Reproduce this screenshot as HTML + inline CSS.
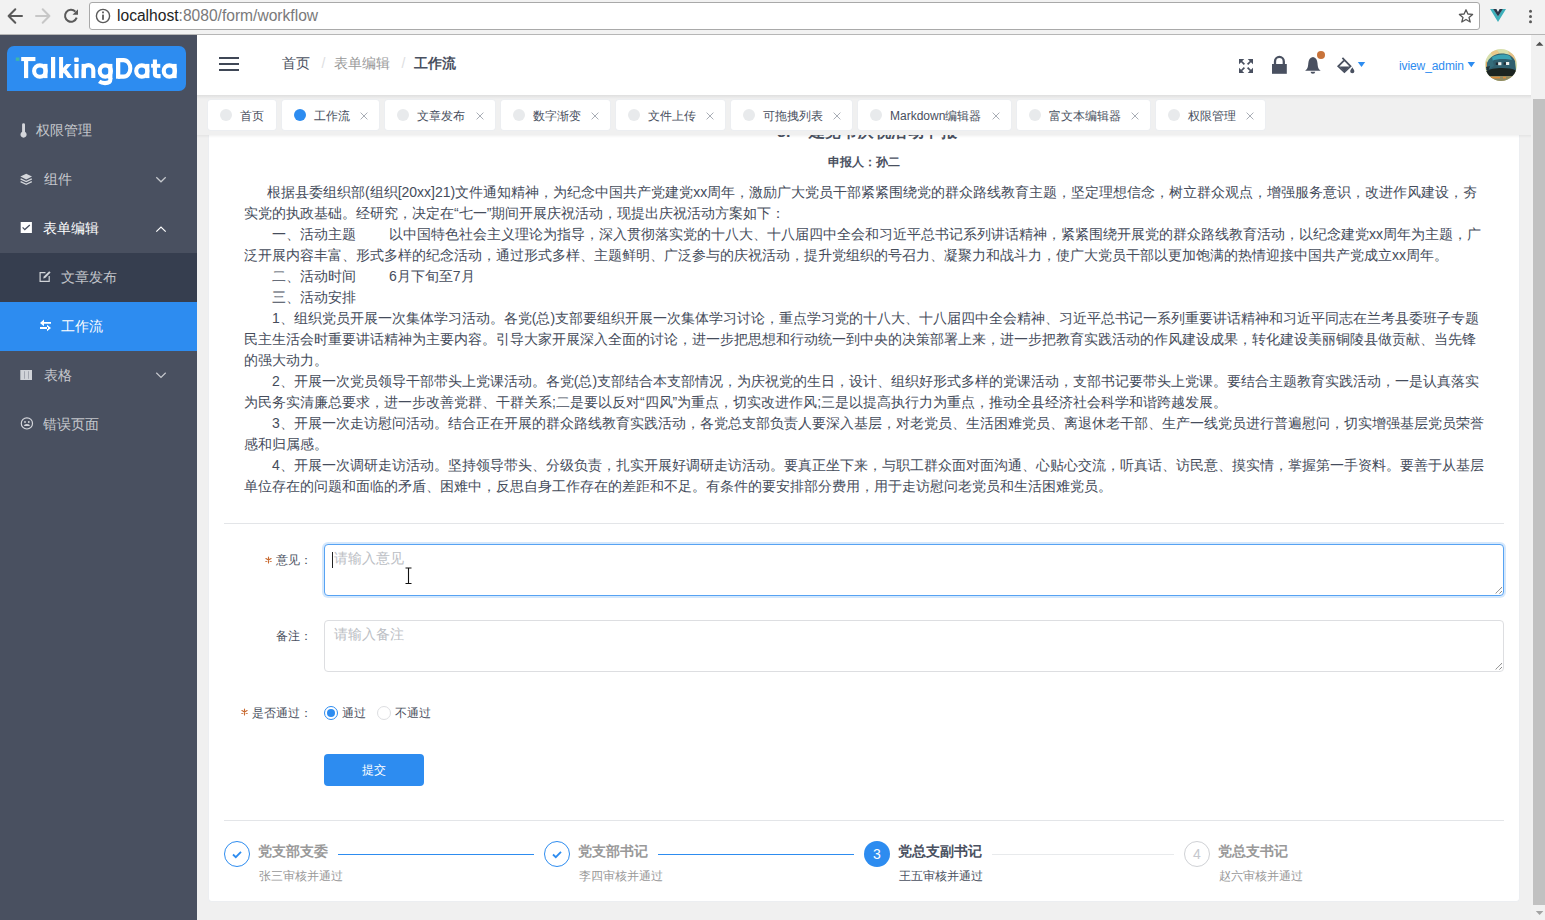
<!DOCTYPE html>
<html><head><meta charset="utf-8">
<style>
*{margin:0;padding:0;box-sizing:border-box}
html,body{width:1545px;height:920px;overflow:hidden;background:#f0f0f0;font-family:"Liberation Sans",sans-serif;color:#495060}
svg{position:absolute;overflow:visible}
i{font-style:normal}
#chrome{position:absolute;left:0;top:0;width:1545px;height:35px;background:#f2f2f2;border-bottom:1px solid #b6b6b6}
#addr{position:absolute;left:89px;top:2px;width:1391px;height:28px;background:#fff;border:1px solid #a9a9a9;border-radius:3px}
#url{position:absolute;left:117px;top:6px;font-size:15.6px;line-height:20px;white-space:nowrap;color:#222}
#url span{color:#7a7a7a}
#side{position:absolute;left:0;top:35px;width:197px;height:885px;background:#495060}
#logo{position:absolute;left:7px;top:46px;width:179px;height:45px;background:#2d8cf0;border-radius:7px 7px 7px 0}
.mt{position:absolute;font-size:14px;line-height:20px;white-space:nowrap;color:rgba(255,255,255,.7)}
#header{position:absolute;left:197px;top:35px;width:1334px;height:60px;background:#fff}
#tabbar{position:absolute;left:197px;top:95px;width:1334px;height:40px;background:#f0f0f0;z-index:3}
#tabshadow{position:absolute;left:197px;top:95px;width:1334px;height:4px;background:linear-gradient(rgba(0,0,0,.07),rgba(0,0,0,0));z-index:4}
#cardshadow{position:absolute;left:197px;top:135px;width:1334px;height:3px;background:linear-gradient(rgba(0,0,0,.05),rgba(0,0,0,0));z-index:4}
.tab{position:absolute;top:100px;height:30px;background:#fff;border-radius:3px;font-size:12px;line-height:30px;white-space:nowrap;color:#495060;box-shadow:0 0 0 1px #eceef1;z-index:5}
.tab .dot{position:absolute;left:12px;top:9px;width:12px;height:12px;border-radius:50%;background:#e8eaec}
.tab .tt{position:absolute;left:32px;top:0.7px}
.tab .x{left:0;top:11.6px;width:8px;height:8px}
#card{position:absolute;left:208px;top:135px;width:1312px;height:767px;background:#fff;border-radius:0 0 4px 4px;border:1px solid #eceef1;border-top:0}
#scroll{position:absolute;left:1531px;top:35px;width:14px;height:885px;background:#f1f1f1}
#thumb{position:absolute;left:1533px;top:99px;width:12px;height:806px;background:#c1c1c1}
.ln{position:absolute;font-size:14px;line-height:21px;white-space:nowrap;color:#454c5b}
.sp{display:inline-block;width:33px}
.hr{position:absolute;left:224px;width:1280px;height:1px;background:#e3e5e8}
.lbl{position:absolute;font-size:12px;line-height:16px;white-space:nowrap;color:#495060}
.req{color:#ed3f14;font-family:"Liberation Mono",monospace;font-size:12px}
.ta{position:absolute;left:324px;width:1180px;height:52px;background:#fff;border:1px solid #dddee1;border-radius:4px}
.ph{position:absolute;left:9px;top:4px;font-size:13.6px;line-height:20px;color:#bbbec4;white-space:nowrap}
.st{position:absolute;font-size:14px;line-height:20px;font-weight:bold;white-space:nowrap;color:#999}
.sc{position:absolute;font-size:12px;line-height:16px;white-space:nowrap;color:#999}
.sl{position:absolute;top:854px;height:1px;background:#2d8cf0}
</style></head><body>
<div id="chrome"></div>
<!-- chrome icons -->
<svg style="left:0;top:0" width="1" height="1">
 <path d="M22 16H8.6M15.3 9.3L8.6 16L15.3 22.7" stroke="#5a5a5a" stroke-width="2" fill="none" stroke-linecap="round" stroke-linejoin="round"/>
 <path d="M36 16H49.4M42.7 9.3L49.4 16L42.7 22.7" stroke="#c7c7c7" stroke-width="2" fill="none" stroke-linecap="round" stroke-linejoin="round"/>
 <path d="M76.7 17.7A6 6 0 1 1 75.4 11.6" stroke="#5a5a5a" stroke-width="2" fill="none"/>
 <path d="M78 9.2V14.7H72.5Z" fill="#5a5a5a"/>
</svg>
<div id="addr"></div>
<svg style="left:0;top:0" width="1" height="1">
 <circle cx="103" cy="16" r="6.6" stroke="#5a5a5a" stroke-width="1.4" fill="none"/>
 <rect x="102.1" y="11.5" width="1.8" height="1.8" fill="#5a5a5a"/>
 <rect x="102.1" y="14.6" width="1.8" height="5.2" fill="#5a5a5a"/>
 <path d="M1466 9.8L1467.9 14L1472.6 14.4L1469 17.4L1470.2 22L1466 19.5L1461.8 22L1463 17.4L1459.4 14.4L1464.1 14Z" stroke="#555" stroke-width="1.3" fill="none" stroke-linejoin="round"/>
 <path d="M1490.1 9H1493.6L1498 16.4L1502.4 9H1506L1498 22.1Z" fill="#3fb0bb"/>
 <path d="M1493.2 9H1496.4L1498 11.9L1499.6 9H1502.8L1498 16.4Z" fill="#2b3548"/>
 <circle cx="1530.5" cy="11.3" r="1.5" fill="#5a5a5a"/>
 <circle cx="1530.5" cy="16.5" r="1.5" fill="#5a5a5a"/>
 <circle cx="1530.5" cy="21.7" r="1.5" fill="#5a5a5a"/>
</svg>
<div id="url">localhost<span>:8080/form/workflow</span></div>

<div id="side"></div>
<div id="logo"></div>
<svg style="left:0;top:0" width="1" height="1">
 <rect x="15.8" y="57.5" width="3.6" height="3.3" fill="#3fb6a8"/>
<g fill="#fff">
  <rect x="21.2" y="57" width="14.2" height="4.1"/>
  <rect x="24" y="57" width="4.2" height="21.1"/>
  <rect x="43.4" y="63.9" width="4.1" height="14.2"/>
  <rect x="51" y="57" width="4.2" height="21.1"/>
  <rect x="59.1" y="57" width="4" height="21.1"/>
  <path d="M63 67.9L66.4 63.9H71.5L63 73.6Z"/>
  <path d="M63.6 72.4L66.4 69.2L73 78.1H67.8Z"/>
  <rect x="74.2" y="57.5" width="4.5" height="4.5" rx="1"/>
  <rect x="74.4" y="63.9" width="4.2" height="14.2"/>
  <rect x="81.6" y="63.9" width="4.2" height="14.2"/>
  <rect x="108.3" y="63.9" width="4.1" height="15"/>
  <rect x="116" y="58.1" width="4.3" height="20.6"/>
  <rect x="145.3" y="63.9" width="4.1" height="14.2"/>
  <rect x="151.1" y="63.9" width="9.2" height="3.8"/>
  <rect x="172.55" y="63.9" width="4.1" height="14.2"/>
 </g>
 <g fill="none" stroke="#fff" stroke-width="4.1">
  <ellipse cx="39.9" cy="71.05" rx="5.8" ry="5.65"/>
  <path d="M83.7 78.1V70A4.8 4.9 0 0 1 93.3 70V78.1"/>
  <ellipse cx="105.3" cy="71.05" rx="5.6" ry="5.65"/>
  <path d="M110.35 78V79.6Q110.35 83.1 105 83.1Q101.6 83.1 99.2 81.4"/>
  <path d="M118 60.15H123.7A6.6 8.25 0 0 1 123.7 76.65H118"/>
  <ellipse cx="141.8" cy="71.05" rx="5.6" ry="5.65"/>
  <path d="M154.9 59.5V73.6Q154.9 76.1 157.4 76.1H160.6"/>
  <ellipse cx="169.35" cy="71.05" rx="5.6" ry="5.65"/>
 </g>
</svg>

<!-- menu -->
<div style="position:absolute;left:0;top:253px;width:197px;height:49px;background:#363e4f"></div>
<div style="position:absolute;left:0;top:302px;width:197px;height:49px;background:#2d8cf0"></div>
<svg style="left:0;top:0" width="1" height="1">
 <!-- thermometer -->
 <path d="M22.1 124.6a1.45 1.45 0 0 1 2.9 0v7.2a3.1 3.1 0 1 1 -2.9 0Z" fill="#d4d6db"/>
 <!-- layers -->
 <path d="M26.2 173.8L32 176.6L26.2 179.4L20.4 176.6Z" fill="#d4d6db"/>
 <path d="M20.6 178.9L26.2 181.6L31.8 178.9" stroke="#d4d6db" stroke-width="1.3" fill="none"/>
 <path d="M20.6 181.6L26.2 184.3L31.8 181.6" stroke="#d4d6db" stroke-width="1.3" fill="none"/>
 <!-- chevrons -->
 <path d="M156.3 177.2L161 181.8L165.7 177.2" stroke="#c6c9ce" stroke-width="1.2" fill="none"/>
 <path d="M156.3 231.6L161 227L165.7 231.6" stroke="#fff" stroke-width="1.2" fill="none"/>
 <path d="M156.3 372.8L161 377.4L165.7 372.8" stroke="#c6c9ce" stroke-width="1.2" fill="none"/>
 <!-- checkbox -->
 <rect x="20.7" y="222" width="11.2" height="11" fill="#fff"/>
 <path d="M22.6 227.4L24.8 229.6L29.8 225" stroke="#495060" stroke-width="1.3" fill="none"/>
 <!-- compose -->
 <path d="M45.5 272.6H40.1V281.3H49.2V276" stroke="#d0d3d8" stroke-width="1.2" fill="none"/>
 <path d="M43.2 278.6L43.8 276.6L49.2 271.2L50.6 272.6L45.2 278Z" fill="#d0d3d8"/>
 <!-- swap -->
 <path d="M43 322H51V323.8H43Z M40 322.9L44 319.6V326.2Z" fill="#fff"/>
 <path d="M40 327.1H48V328.9H40Z M51 328L47 324.7V331.3Z" fill="#fff"/>
 <!-- table -->
 <rect x="20.3" y="370" width="11.7" height="10" fill="#d0d3d8"/>
 <rect x="24" y="371.2" width="0.9" height="7.6" fill="#9da1ab"/>
 <rect x="28" y="371.2" width="0.9" height="7.6" fill="#9da1ab"/>
 <!-- sad -->
 <circle cx="26.9" cy="423.4" r="5.6" stroke="#d4d6db" stroke-width="1.2" fill="none"/>
 <circle cx="25" cy="422" r="0.9" fill="#d4d6db"/>
 <circle cx="28.8" cy="422" r="0.9" fill="#d4d6db"/>
 <path d="M24 426A2.9 2 0 0 1 29.8 426Z" fill="#d4d6db"/>
</svg>
<div class="mt" style="left:36px;top:120px">权限管理</div>
<div class="mt" style="left:43.5px;top:169px">组件</div>
<div class="mt" style="left:43px;top:218px;color:#fff">表单编辑</div>
<div class="mt" style="left:60.5px;top:267px">文章发布</div>
<div class="mt" style="left:61px;top:316px;color:#fff">工作流</div>
<div class="mt" style="left:43.5px;top:365px">表格</div>
<div class="mt" style="left:42.5px;top:414px">错误页面</div>

<div id="header"></div>
<svg style="left:0;top:0" width="1" height="1">
 <rect x="219" y="57" width="20" height="2" fill="#3f4756"/>
 <rect x="219" y="63" width="20" height="2" fill="#3f4756"/>
 <rect x="219" y="69" width="20" height="2" fill="#3f4756"/>
</svg>
<div class="mt" style="left:282px;top:53px;color:#495060">首页</div>
<div class="mt" style="left:321.5px;top:53px;color:#dddee1">/</div>
<div class="mt" style="left:334px;top:53px;color:#999">表单编辑</div>
<div class="mt" style="left:401.5px;top:53px;color:#dddee1">/</div>
<div class="mt" style="left:414px;top:53px;color:#495060;font-weight:bold">工作流</div>

<svg style="left:0;top:0" width="1" height="1">
 <!-- fullscreen -->
 <path d="M1239 59H1244.3L1239 64.3Z M1253 59H1247.7L1253 64.3Z M1239 73H1244.3L1239 67.7Z M1253 73H1247.7L1253 67.7Z" fill="#495060"/>
 <path d="M1240.5 60.5L1244.4 64.4 M1251.5 60.5L1247.6 64.4 M1240.5 71.5L1244.4 67.6 M1251.5 71.5L1247.6 67.6" stroke="#495060" stroke-width="1.7"/>
 <!-- lock -->
 <rect x="1272" y="64" width="14.8" height="9.8" fill="#495060"/>
 <path d="M1275 64.5V61.4A4.4 4.5 0 0 1 1283.8 61.4V64.5" stroke="#495060" stroke-width="2.3" fill="none"/>
 <!-- bell -->
 <path d="M1313 57C1309.8 57.8 1308.6 59.8 1308.3 63.2C1308 67.5 1307.3 69.3 1305 70.7H1320.8C1318.5 69.3 1317.8 67.5 1317.5 63.2C1317.2 59.8 1316 57.8 1313 57Z" fill="#495060"/>
 <path d="M1310.6 71.8H1315.2A2.3 2 0 0 1 1310.6 71.8Z" fill="#495060"/>
 <circle cx="1321" cy="55" r="4" fill="#c8733a"/>
 <!-- paint bucket -->
 <path d="M1342.4 57.8L1344.8 60.2L1337.6 66.4L1344.3 72.9L1351.2 66.6Z" fill="none"/>
 <path d="M1342.4 57.8L1350.6 66.3L1344.4 72.2L1338.2 66.3L1343.9 60.6" stroke="#495060" stroke-width="1.7" fill="none" stroke-linejoin="miter"/>
 <path d="M1339.4 66.6H1349.6L1344.4 71.6Z" fill="#495060"/>
 <path d="M1352.3 67.3C1351.3 69 1350.2 70.3 1350.2 71.2A2.1 2.1 0 0 0 1354.4 71.2C1354.4 70.3 1353.3 69 1352.3 67.3Z" fill="#495060"/>
 <path d="M1357.8 62H1365.2L1361.5 67Z" fill="#2d8cf0"/>
 <!-- user triangle -->
 <path d="M1467.6 62H1475L1471.3 67.2Z" fill="#2d8cf0"/>
</svg>
<div style="position:absolute;left:1399px;top:58px;font-size:12px;line-height:16px;color:#2d8cf0;white-space:nowrap;letter-spacing:-0.1px">iview_admin</div>
<svg style="left:0;top:0" width="1" height="1">
 <defs><clipPath id="av"><circle cx="1501" cy="65" r="16"/></clipPath></defs>
 <g clip-path="url(#av)">
  <rect x="1485" y="49" width="32" height="32" fill="#d8dfac"/>
  <path d="M1490 52L1497 50L1500 54L1493 56Z" fill="#e9c98a"/>
  <path d="M1508 51L1514 55L1516 62L1511 60Z" fill="#e5c088"/>
  <path d="M1486 61L1488 64L1486 70Z" fill="#e0a060"/>
  <path d="M1487 66C1488 58 1494 54 1501 53.6C1508 53.5 1513 56 1515 61L1516 70H1486Z" fill="#2f5f6e"/>
  <path d="M1491 58C1495 54.5 1504 53.5 1510 56L1512 60C1506 58.5 1497 58.5 1492 61Z" fill="#3aa3b4"/>
  <path d="M1487 63C1488 60 1490 58 1492 57L1494 66L1487 70Z" fill="#346c7a"/>
  <rect x="1498.2" y="62.2" width="3.2" height="3" fill="#eef0ec"/>
  <rect x="1506" y="62" width="3.2" height="3" fill="#eef0ec"/>
  <rect x="1495.8" y="62.6" width="2.2" height="2.4" fill="#1d2a33"/>
  <rect x="1503.6" y="62.4" width="2.2" height="2.4" fill="#1d2a33"/>
  <path d="M1486 71C1492 67.5 1509 67 1516 70.5V76H1486Z" fill="#1b2420"/>
  <path d="M1486 67L1490 66L1488 72Z" fill="#23333a"/>
  <rect x="1485" y="76" width="32" height="5" fill="#8f8a62"/>
  <rect x="1491" y="76.8" width="9" height="1.6" fill="#d98b3c"/>
  <rect x="1503" y="76.8" width="3" height="1.6" fill="#d98b3c"/>
 </g>
</svg>

<div id="card"></div>
<div style="position:absolute;left:777px;top:122px;font-size:16px;line-height:20px;font-weight:bold;white-space:nowrap;color:#495060">8.</div>
<div style="position:absolute;left:809px;top:122px;font-size:16px;line-height:20px;font-weight:bold;white-space:nowrap;color:#495060;letter-spacing:0.45px">建党节庆祝活动申报</div>
<div id="tabbar"></div>
<div id="tabshadow"></div>
<div id="cardshadow"></div>
<div class="tab" style="left:208px;width:68px"><i class="dot"></i><span class="tt">首页</span></div>
<div class="tab" style="left:282px;width:97px"><i class="dot" style="background:#2d8cf0"></i><span class="tt">工作流</span><svg class="x" style="left:78px" viewBox="0 0 8 8"><path d="M0.6 0.6L7.4 7.4M7.4 0.6L0.6 7.4" stroke="#a9aeb6" stroke-width="1" fill="none"/></svg></div>
<div class="tab" style="left:385px;width:110px"><i class="dot"></i><span class="tt">文章发布</span><svg class="x" style="left:91px" viewBox="0 0 8 8"><path d="M0.6 0.6L7.4 7.4M7.4 0.6L0.6 7.4" stroke="#a9aeb6" stroke-width="1" fill="none"/></svg></div>
<div class="tab" style="left:501px;width:109px"><i class="dot"></i><span class="tt">数字渐变</span><svg class="x" style="left:90px" viewBox="0 0 8 8"><path d="M0.6 0.6L7.4 7.4M7.4 0.6L0.6 7.4" stroke="#a9aeb6" stroke-width="1" fill="none"/></svg></div>
<div class="tab" style="left:616px;width:109px"><i class="dot"></i><span class="tt">文件上传</span><svg class="x" style="left:90px" viewBox="0 0 8 8"><path d="M0.6 0.6L7.4 7.4M7.4 0.6L0.6 7.4" stroke="#a9aeb6" stroke-width="1" fill="none"/></svg></div>
<div class="tab" style="left:731px;width:121px"><i class="dot"></i><span class="tt">可拖拽列表</span><svg class="x" style="left:102px" viewBox="0 0 8 8"><path d="M0.6 0.6L7.4 7.4M7.4 0.6L0.6 7.4" stroke="#a9aeb6" stroke-width="1" fill="none"/></svg></div>
<div class="tab" style="left:858px;width:153px"><i class="dot"></i><span class="tt">Markdown编辑器</span><svg class="x" style="left:134px" viewBox="0 0 8 8"><path d="M0.6 0.6L7.4 7.4M7.4 0.6L0.6 7.4" stroke="#a9aeb6" stroke-width="1" fill="none"/></svg></div>
<div class="tab" style="left:1017px;width:133px"><i class="dot"></i><span class="tt">富文本编辑器</span><svg class="x" style="left:114px" viewBox="0 0 8 8"><path d="M0.6 0.6L7.4 7.4M7.4 0.6L0.6 7.4" stroke="#a9aeb6" stroke-width="1" fill="none"/></svg></div>
<div class="tab" style="left:1156px;width:109px"><i class="dot"></i><span class="tt">权限管理</span><svg class="x" style="left:90px" viewBox="0 0 8 8"><path d="M0.6 0.6L7.4 7.4M7.4 0.6L0.6 7.4" stroke="#a9aeb6" stroke-width="1" fill="none"/></svg></div>

<div style="position:absolute;left:828px;top:154px;font-size:12px;line-height:16px;font-weight:bold;white-space:nowrap;color:#495060">申报人：孙二</div>
<div class="ln" style="left:267px;top:182px">根据县委组织部(组织[20xx]21)文件通知精神，为纪念中国共产党建党xx周年，激励广大党员干部紧紧围绕党的群众路线教育主题，坚定理想信念，树立群众观点，增强服务意识，改进作风建设，夯</div>
<div class="ln" style="left:244px;top:203px">实党的执政基础。经研究，决定在“七一”期间开展庆祝活动，现提出庆祝活动方案如下：</div>
<div class="ln" style="left:272px;top:224px">一、活动主题<i class='sp'></i>以中国特色社会主义理论为指导，深入贯彻落实党的十八大、十八届四中全会和习近平总书记系列讲话精神，紧紧围绕开展党的群众路线教育活动，以纪念建党xx周年为主题，广</div>
<div class="ln" style="left:244px;top:245px">泛开展内容丰富、形式多样的纪念活动，通过形式多样、主题鲜明、广泛参与的庆祝活动，提升党组织的号召力、凝聚力和战斗力，使广大党员干部以更加饱满的热情迎接中国共产党成立xx周年。</div>
<div class="ln" style="left:272px;top:266px">二、活动时间<i class='sp'></i>6月下旬至7月</div>
<div class="ln" style="left:272px;top:287px">三、活动安排</div>
<div class="ln" style="left:272px;top:308px">1、组织党员开展一次集体学习活动。各党(总)支部要组织开展一次集体学习讨论，重点学习党的十八大、十八届四中全会精神、习近平总书记一系列重要讲话精神和习近平同志在兰考县委班子专题</div>
<div class="ln" style="left:244px;top:329px">民主生活会时重要讲话精神为主要内容。引导大家开展深入全面的讨论，进一步把思想和行动统一到中央的决策部署上来，进一步把教育实践活动的作风建设成果，转化建设美丽铜陵县做贡献、当先锋</div>
<div class="ln" style="left:244px;top:350px">的强大动力。</div>
<div class="ln" style="left:272px;top:371px">2、开展一次党员领导干部带头上党课活动。各党(总)支部结合本支部情况，为庆祝党的生日，设计、组织好形式多样的党课活动，支部书记要带头上党课。要结合主题教育实践活动，一是认真落实</div>
<div class="ln" style="left:244px;top:392px">为民务实清廉总要求，进一步改善党群、干群关系;二是要以反对“四风”为重点，切实改进作风;三是以提高执行力为重点，推动全县经济社会科学和谐跨越发展。</div>
<div class="ln" style="left:272px;top:413px">3、开展一次走访慰问活动。结合正在开展的群众路线教育实践活动，各党总支部负责人要深入基层，对老党员、生活困难党员、离退休老干部、生产一线党员进行普遍慰问，切实增强基层党员荣誉</div>
<div class="ln" style="left:244px;top:434px">感和归属感。</div>
<div class="ln" style="left:272px;top:455px">4、开展一次调研走访活动。坚持领导带头、分级负责，扎实开展好调研走访活动。要真正坐下来，与职工群众面对面沟通、心贴心交流，听真话、访民意、摸实情，掌握第一手资料。要善于从基层</div>
<div class="ln" style="left:244px;top:476px">单位存在的问题和面临的矛盾、困难中，反思自身工作存在的差距和不足。有条件的要安排部分费用，用于走访慰问老党员和生活困难党员。</div>


<div class="hr" style="top:523px"></div>
<div class="lbl" style="left:276px;top:551.5px">意见：</div>
<div class="ta" style="top:544px;border-color:#57a3f3;box-shadow:0 0 0 2px rgba(45,140,240,.2)"><div class="ph">请输入意见</div></div>
<div style="position:absolute;left:332px;top:552px;width:1px;height:16px;background:#222"></div>
<svg style="left:0;top:0;z-index:2" width="1" height="1">
 <path d="M405.5 568H411.5M405.5 583.5H411.5M408.5 568V583.5" stroke="#111" stroke-width="1.1" fill="none"/>
 <path d="M1501.8 587.3L1495.4 593.7M1501.8 591.2L1499.3 593.7" stroke="#5a5a5a" stroke-width="1" stroke-dasharray="1 .45"/>
 <path d="M1501.8 663.3L1495.4 669.7M1501.8 667.2L1499.3 669.7" stroke="#5a5a5a" stroke-width="1" stroke-dasharray="1 .45"/>
</svg>
<div class="lbl" style="left:276px;top:628px">备注：</div>
<div class="ta" style="top:620px"><div class="ph">请输入备注</div></div>

<div class="lbl" style="left:252px;top:704.5px">是否通过：</div>
<svg style="left:0;top:0" width="1" height="1">
 <circle cx="331" cy="713" r="6.5" stroke="#2d8cf0" stroke-width="1" fill="#fff"/>
 <circle cx="331" cy="713" r="4" fill="#2d8cf0"/>
 <circle cx="384" cy="713" r="6.5" stroke="#dddee1" stroke-width="1" fill="#fff"/>
</svg>
<div class="lbl" style="left:342px;top:705px">通过</div>
<div class="lbl" style="left:395px;top:705px">不通过</div>
<div style="position:absolute;left:324px;top:754px;width:100px;height:32px;background:#2d8cf0;border-radius:4px;color:#fff;font-size:12px;line-height:32px;text-align:center">提交</div>

<svg style="left:0;top:0" width="1" height="1">
 <g stroke="#c8692f" stroke-width="1.1" stroke-linecap="round">
  <path d="M268.5 557V563M265.9 558.5L271.1 561.5M265.9 561.5L271.1 558.5"/>
  <path d="M244.5 709V715M241.9 710.5L247.1 713.5M241.9 713.5L247.1 710.5"/>
 </g>
</svg>
<div class="hr" style="top:820px"></div>
<!-- steps -->
<div class="sl" style="left:338px;width:196px"></div>
<div class="sl" style="left:658px;width:196px"></div>
<div class="sl" style="left:992px;width:182px;background:#e8eaec"></div>
<svg style="left:0;top:0" width="1" height="1">
 <circle cx="237" cy="854" r="12.5" stroke="#2d8cf0" stroke-width="1" fill="#fff"/>
 <path d="M233 854.5L235.8 857.2L241 851.8" stroke="#2d8cf0" stroke-width="1.8" fill="none"/>
 <circle cx="557" cy="854" r="12.5" stroke="#2d8cf0" stroke-width="1" fill="#fff"/>
 <path d="M553 854.5L555.8 857.2L561 851.8" stroke="#2d8cf0" stroke-width="1.8" fill="none"/>
 <circle cx="877" cy="854" r="13" fill="#2d8cf0"/>
 <circle cx="1197" cy="854" r="12.5" stroke="#cfd1d5" stroke-width="1" fill="#fff"/>
</svg>
<div style="position:absolute;left:871px;top:846px;width:12px;text-align:center;font-size:14px;line-height:16px;color:#fff">3</div>
<div style="position:absolute;left:1191px;top:846px;width:12px;text-align:center;font-size:14px;line-height:16px;color:#c5c8ce">4</div>
<div class="st" style="left:258px;top:841px">党支部支委</div>
<div class="sc" style="left:259px;top:868px">张三审核并通过</div>
<div class="st" style="left:578px;top:841px">党支部书记</div>
<div class="sc" style="left:579px;top:868px">李四审核并通过</div>
<div class="st" style="left:898px;top:841px;color:#495060">党总支副书记</div>
<div class="sc" style="left:899px;top:868px;color:#495060">王五审核并通过</div>
<div class="st" style="left:1218px;top:841px">党总支书记</div>
<div class="sc" style="left:1219px;top:868px">赵六审核并通过</div>

<div id="scroll"></div>
<div id="thumb"></div>
<svg style="left:0;top:0" width="1" height="1">
 <path d="M1535.8 45.8H1543.4L1539.6 41.8Z" fill="#505050"/>
 <path d="M1535.8 911H1543.4L1539.6 915Z" fill="#a3a3a3"/>
</svg>
</body></html>
